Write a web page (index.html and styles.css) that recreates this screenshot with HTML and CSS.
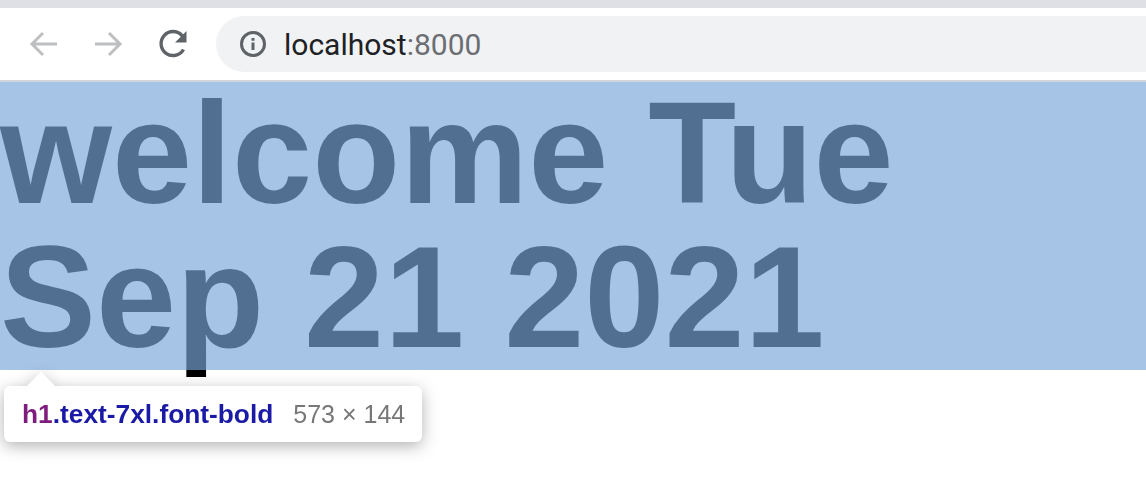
FILE: index.html
```html
<!DOCTYPE html>
<html lang="en">
<head>
    <meta charset="UTF-8">
    <title>localhost:8000</title>
    <link rel="stylesheet" href="styles.css">
</head>
<body>
    <div class="tab-strip"></div>
    <div class="toolbar">
        <svg class="nav-icon back" viewBox="0 0 32 32"><path d="M29 16H5M15 5 4 16 15 27"/></svg>
        <svg class="nav-icon forward" viewBox="0 0 32 32"><path d="M3 16h24M17 5 28 16 17 27"/></svg>
        <svg class="nav-icon reload" viewBox="0 0 32 32">
            <path d="M25.500 21.500A12 12 0 1 1 24 7.500l2 2.200"/>
            <path class="fill" d="M28.500 3v11.500H17z"/>
        </svg>
        <div class="address-bar">
            <svg class="info-icon" viewBox="0 0 28 28">
                <circle cx="14" cy="14" r="11.500"/>
                <path class="fill" d="M12.500 12.500h3V20h-3zM12.500 8h3v2.800h-3z"/>
            </svg>
            <span class="host">localhost</span><span class="port">:8000</span>
        </div>
    </div>
    <div class="page">
        <h1 class="title">welcome Tue<br>Sep 21 2021</h1>
        <div class="highlight"></div>
        <div class="tooltip">
            <span class="tag">h1</span><span class="classes">.text-7xl.font-bold</span>
            <span class="size">573 × 144</span>
        </div>
    </div>
</body>
</html>
```

FILE: styles.css
```css
* { box-sizing: border-box; }
html, body { margin: 0; height: 100%; overflow: hidden; background: white; }
.tab-strip {
    height: 8px;
    background: #dfe0e5;
}
.toolbar {
    height: 74px;
    padding: 8px 0 0 28px;
    display: flex;
    align-items: flex-start;
    background: white;
    border-bottom: 2px solid #d2d5da;
}
.nav-icon {
    width: 32px;
    height: 32px;
    margin-top: 12px;
    flex-shrink: 0;
    fill: none;
    stroke-width: 3;
}
.nav-icon.back, .nav-icon.forward { stroke: #bdbfc1; }
.nav-icon.forward { margin-left: 32px; }
.nav-icon.reload { margin-left: 34px; stroke: #5f6368; stroke-width: 3.400; }
.nav-icon .fill { fill: #5f6368; stroke: none; }
.address-bar {
    flex: 1;
    height: 56px;
    margin-left: 26px;
    margin-right: -40px;
    padding-left: 23px;
    display: flex;
    align-items: center;
    border-radius: 28px;
    background: #f1f2f4;
    font-family: Roboto, "Liberation Sans", sans-serif;
    font-size: 30px;
}
.info-icon {
    width: 28px;
    height: 28px;
    margin-right: 17px;
    fill: none;
    stroke: #5f6368;
    stroke-width: 3;
}
.info-icon .fill { fill: #5f6368; stroke: none; }
.host { color: #202124; }
.port { color: #6b6e72; }
.page { position: relative; }
.title {
    margin: 0;
    font-family: "Liberation Sans", Arial, sans-serif;
    font-size: 144px;
    line-height: 144px;
    font-weight: 700;
    color: black;
}
.highlight {
    position: absolute;
    left: 0;
    right: 0;
    top: 0;
    height: 288px;
    background: rgba(121, 166, 216, 0.667);
}
.tooltip {
    position: absolute;
    left: 4px;
    top: 304px;
    width: 418px;
    height: 56px;
    padding-left: 18px;
    display: flex;
    align-items: center;
    border-radius: 6px;
    background: white;
    filter: drop-shadow(0 4px 8px rgba(0, 0, 0, 0.3));
    font-family: "Liberation Sans", Arial, sans-serif;
    font-size: 26.300px;
    line-height: 28px;
}
.tooltip::before {
    content: "";
    position: absolute;
    left: 27px;
    top: -10px;
    width: 20px;
    height: 20px;
    background: white;
    transform: rotate(45deg);
}
.tag { position: relative; color: #7f1d7f; font-weight: 700; }
.classes { position: relative; color: #1a1aa6; font-weight: 700; }
.size { position: relative; margin-left: 20px; color: #777; font-size: 25px; }
```
